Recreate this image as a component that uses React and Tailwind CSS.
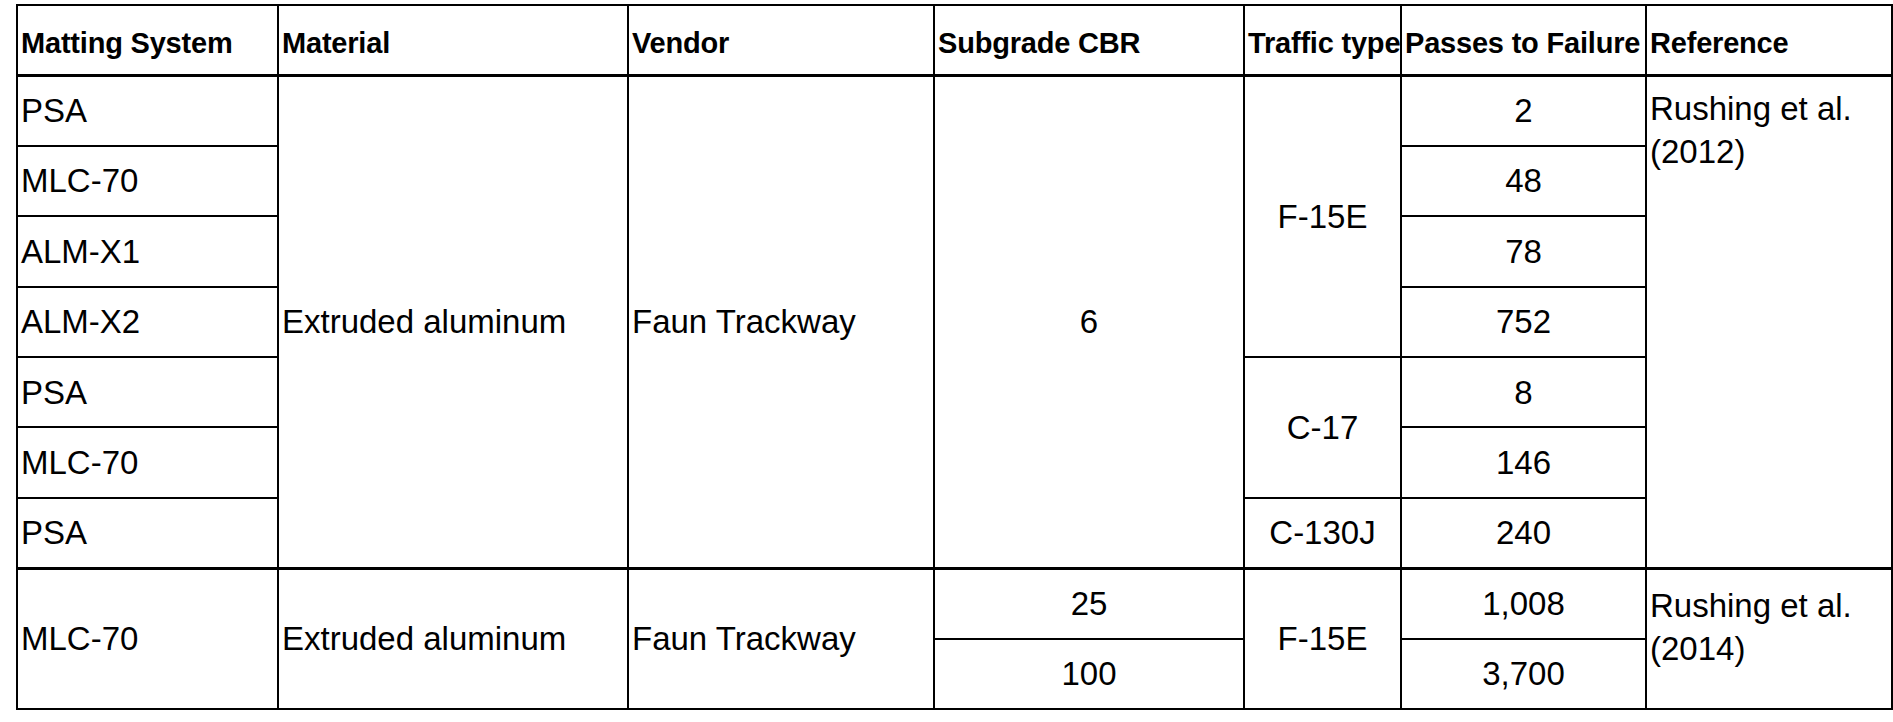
import React from "react";

const th = "border-2 border-black border-b-[3px] px-[3px] pt-[6px] text-left align-middle font-bold text-[29px] leading-[34px] tracking-[-0.2px]";
const td = "border-2 border-black px-[3px] align-middle";
const tdc = "border-2 border-black px-[3px] align-middle text-center";
const sep = "border-b-[3px]";

export default function App() {
    return (
        <div className="min-h-screen bg-white pl-[16px] pt-[4px] text-black font-['Liberation_Sans',Arial,sans-serif]">
            <table className="table-fixed border-collapse w-[1875px] text-[33px] leading-[43px]">
                <colgroup>
                    <col className="w-[261px]" />
                    <col className="w-[350px]" />
                    <col className="w-[306px]" />
                    <col className="w-[310px]" />
                    <col className="w-[157px]" />
                    <col className="w-[245px]" />
                    <col className="w-[246px]" />
                </colgroup>
                <thead>
                    <tr className="h-[70.4px]">
                        <th className={th}>Matting System</th>
                        <th className={th}>Material</th>
                        <th className={th}>Vendor</th>
                        <th className={th}>Subgrade CBR</th>
                        <th className={`${th} whitespace-nowrap`}>Traffic type</th>
                        <th className={`${th} whitespace-nowrap`}>Passes to Failure</th>
                        <th className={th}>Reference</th>
                    </tr>
                </thead>
                <tbody>
                    <tr className="h-[70.4px]">
                        <td className={td}>PSA</td>
                        <td className={`${td} ${sep}`} rowSpan={7}>Extruded aluminum</td>
                        <td className={`${td} ${sep}`} rowSpan={7}>Faun Trackway</td>
                        <td className={`${tdc} ${sep}`} rowSpan={7}>6</td>
                        <td className={tdc} rowSpan={4}>F-15E</td>
                        <td className={tdc}>2</td>
                        <td className={`${td} ${sep} align-top pt-[10px]`} rowSpan={7}>Rushing et al. (2012)</td>
                    </tr>
                    <tr className="h-[70.4px]">
                        <td className={td}>MLC-70</td>
                        <td className={tdc}>48</td>
                    </tr>
                    <tr className="h-[70.4px]">
                        <td className={td}>ALM-X1</td>
                        <td className={tdc}>78</td>
                    </tr>
                    <tr className="h-[70.4px]">
                        <td className={td}>ALM-X2</td>
                        <td className={tdc}>752</td>
                    </tr>
                    <tr className="h-[70.4px]">
                        <td className={td}>PSA</td>
                        <td className={tdc} rowSpan={2}>C-17</td>
                        <td className={tdc}>8</td>
                    </tr>
                    <tr className="h-[70.4px]">
                        <td className={td}>MLC-70</td>
                        <td className={tdc}>146</td>
                    </tr>
                    <tr className={`h-[70.4px] ${sep}`}>
                        <td className={`${td} ${sep}`}>PSA</td>
                        <td className={`${tdc} ${sep}`}>C-130J</td>
                        <td className={`${tdc} ${sep}`}>240</td>
                    </tr>
                    <tr className="h-[70.4px]">
                        <td className={td} rowSpan={2}>MLC-70</td>
                        <td className={td} rowSpan={2}>Extruded aluminum</td>
                        <td className={td} rowSpan={2}>Faun Trackway</td>
                        <td className={tdc}>25</td>
                        <td className={tdc} rowSpan={2}>F-15E</td>
                        <td className={tdc}>1,008</td>
                        <td className={`${td} align-top pt-[14px]`} rowSpan={2}>Rushing et al. (2014)</td>
                    </tr>
                    <tr className="h-[70.4px]">
                        <td className={tdc}>100</td>
                        <td className={tdc}>3,700</td>
                    </tr>
                </tbody>
            </table>
        </div>
    );
}
